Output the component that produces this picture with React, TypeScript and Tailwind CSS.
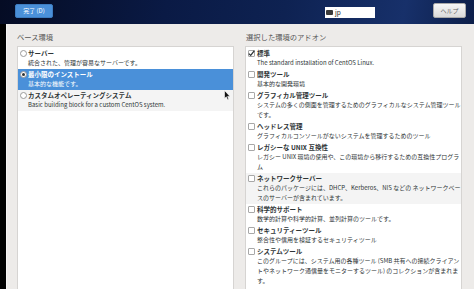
import React from "react";

type Item = { title: string; lines: string[]; checked?: boolean; selected?: boolean; hover?: boolean };

const baseEnv: Item[] = [
  { title: "サーバー", lines: ["統合された、管理が容易なサーバーです。"] },
  { title: "最小限のインストール", lines: ["基本的な機能です。"], selected: true, checked: true },
  { title: "カスタムオペレーティングシステム", lines: ["Basic building block for a custom CentOS system."], hover: true },
];

const addons: Item[] = [
  { title: "標準", lines: ["The standard installation of CentOS Linux."], checked: true },
  { title: "開発ツール", lines: ["基本的な開発環境"] },
  { title: "グラフィカル管理ツール", lines: ["システムの多くの側面を管理するためのグラフィカルなシステム管理ツール", "です。"] },
  { title: "ヘッドレス管理", lines: ["グラフィカルコンソールがないシステムを管理するためのツール"] },
  { title: "レガシーな UNIX 互換性", lines: ["レガシー UNIX 環境の使用や、この環境から移行するための互換性プログラ", "ム"] },
  { title: "ネットワークサーバー", lines: ["これらのパッケージには、DHCP、Kerberos、NIS などの ネットワークベー", "スのサーバーが含まれています。"], hover: true },
  { title: "科学的サポート", lines: ["数学的計算や科学的計算、並列計算のツールです。"] },
  { title: "セキュリティーツール", lines: ["整合性や信用を検証するセキュリティツール"] },
  { title: "システムツール", lines: ["このグループには、システム用の各種ツール (SMB 共有への接続クライアン", "トやネットワーク通信量をモニターするツール) のコレクションが含まれま", "す。"] },
];

function Radio({ on }: { on?: boolean }) {
  return (
    <div className="w-[7px] h-[7px] rounded-full border border-[#9a9a9a] bg-white flex items-center justify-center shrink-0">
      {on && <div className="w-[3px] h-[3px] rounded-full bg-[#2e3436]" />}
    </div>
  );
}

function Check({ on }: { on?: boolean }) {
  return (
    <div className="w-[7px] h-[7px] rounded-[1px] border border-[#a8a8a8] bg-white flex items-center justify-center shrink-0">
      {on && (
        <svg width="7" height="7" viewBox="0 0 7 7" className="overflow-visible">
          <path d="M0.8 3.6 L2.7 5.4 L6.4 0.6" fill="none" stroke="#2e3436" strokeWidth="1.3" />
        </svg>
      )}
    </div>
  );
}

function Row({ item, kind }: { item: Item; kind: "radio" | "check" }) {
  const sel = item.selected;
  return (
    <div
      className={
        "flex flex-col pl-[2px] pb-[1px] " +
        (sel ? "bg-[#4a90d9] text-white" : item.hover ? "bg-[#f4f4f4] text-[#2e3436]" : "text-[#2e3436]")
      }
    >
      <div className={"flex items-center h-[10px] " + (kind === "radio" ? "gap-[1px]" : "gap-[2px]")}>
        {kind === "radio" ? <Radio on={item.checked} /> : <Check on={item.checked} />}
        <span className="text-[6.5px] font-bold leading-[10px] whitespace-nowrap">{item.title}</span>
      </div>
      {item.lines.map((l, i) => (
        <div
          key={i}
          className={
            "text-[6px] leading-[10px] whitespace-nowrap " + (kind === "radio" ? "pl-[8px]" : "pl-[9px]")
          }
        >
          {l}
        </div>
      ))}
    </div>
  );
}

export default function App() {
  return (
    <div className="w-[474px] h-[289px] overflow-hidden relative font-['Noto_Sans_CJK_JP','Noto_Sans',sans-serif]">
      <div className="h-[24px] bg-[linear-gradient(100deg,#050c24_0%,#0a1a45_35%,#0e2252_60%,#17306a_85%,#0d1f4a_100%)] relative">
        <div className="absolute left-[15px] top-[4px] w-[38px] h-[14px] rounded-[2px] bg-[#4a90d9] border border-[#3d7cc0] flex items-center justify-center text-white text-[6px] leading-none">
          完了 (D)
        </div>
        <div className="absolute left-[325px] top-[7px] w-[50px] h-[11px] bg-white flex items-center gap-[2px] pl-[1px]">
          <div className="w-[7px] h-[5px] bg-[#3a3a3a] rounded-[1px]" />
          <span className="text-[6.5px] leading-none text-[#222]">jp</span>
        </div>
        <div className="absolute left-[433px] top-[3px] w-[33px] h-[15px] rounded-[2px] border border-[#a9a9a9] bg-[linear-gradient(#f7f7f7,#dadada)] flex items-center justify-center text-[6px] text-[#666] leading-none">
          ヘルプ
        </div>
      </div>
      <div className="flex h-[265px]">
        <div className="w-[6px] bg-black" />
        <div className="w-[1px] bg-[#f6f5f4]" />
        <div className="flex-1 bg-[#edebe9] flex pl-[10px] pr-[12px] pt-[8px] gap-[11px]">
          <div className="w-[217px] flex flex-col">
            <div className="h-[10px] text-[7.3px] leading-[10px] text-[#555] mb-[4px]">ベース環境</div>
            <div className="flex-1 bg-white border border-[#d6d4d2] pt-[1px] -mb-[4px]">
              {baseEnv.map((it, i) => (
                <Row key={i} item={it} kind="radio" />
              ))}
            </div>
          </div>
          <div className="w-[217px] flex flex-col">
            <div className="h-[10px] text-[7.3px] leading-[10px] text-[#555] mb-[4px] pl-[1px]">選択した環境のアドオン</div>
            <div className="flex-1 bg-white border border-[#d6d4d2] pt-[1px] -mb-[4px]">
              {addons.map((it, i) => (
                <Row key={i} item={it} kind="check" />
              ))}
            </div>
          </div>
        </div>
      </div>
      <svg className="absolute left-[224px] top-[90px]" width="7" height="11" viewBox="0 0 7 11">
        <path d="M0.5 0.5 L0.5 8.5 L2.3 6.8 L3.6 9.8 L4.8 9.3 L3.6 6.4 L6 6.4 Z" fill="#111" stroke="#fff" strokeWidth="0.6" />
      </svg>
    </div>
  );
}
